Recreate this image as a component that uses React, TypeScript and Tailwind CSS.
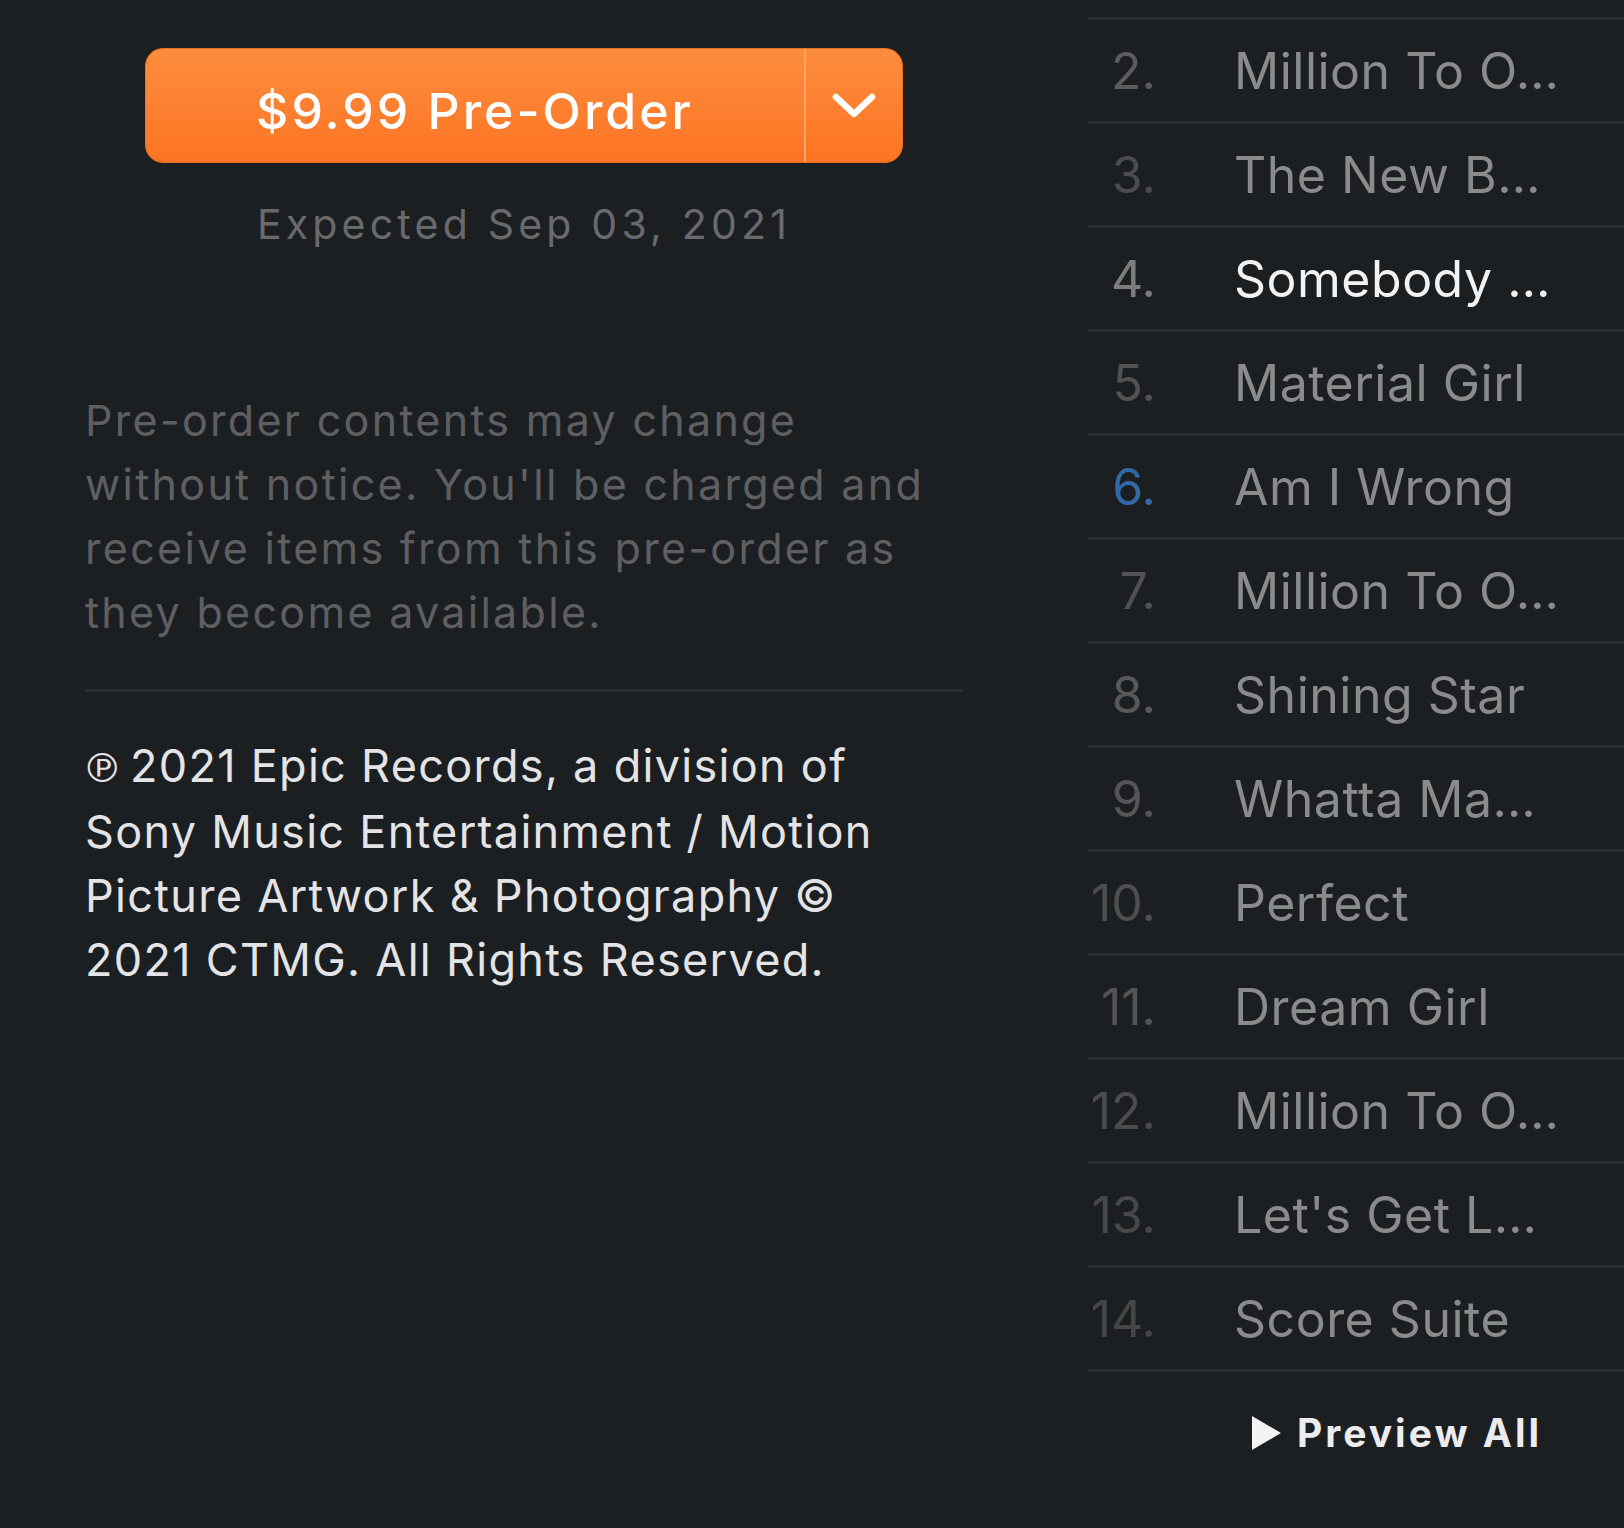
import React from "react";

const tracks: { n: string; t: string; nc: string; tc: string }[] = [
  { n: "2.", t: "Million To O…", nc: "text-[#5c5c5f]", tc: "text-[#8b8b8e]" },
  { n: "3.", t: "The New B…", nc: "text-[#4c4c4f]", tc: "text-[#8b8b8e]" },
  { n: "4.", t: "Somebody …", nc: "text-[#7d7d80]", tc: "text-[#f2f2f2]" },
  { n: "5.", t: "Material Girl", nc: "text-[#525255]", tc: "text-[#8b8b8e]" },
  { n: "6.", t: "Am I Wrong", nc: "text-[#2f6aa6]", tc: "text-[#8b8b8e]" },
  { n: "7.", t: "Million To O…", nc: "text-[#525255]", tc: "text-[#8b8b8e]" },
  { n: "8.", t: "Shining Star", nc: "text-[#59595c]", tc: "text-[#8b8b8e]" },
  { n: "9.", t: "Whatta Ma…", nc: "text-[#565659]", tc: "text-[#8b8b8e]" },
  { n: "10.", t: "Perfect", nc: "text-[#4e4e51]", tc: "text-[#8b8b8e]" },
  { n: "11.", t: "Dream Girl", nc: "text-[#545457]", tc: "text-[#8b8b8e]" },
  { n: "12.", t: "Million To O…", nc: "text-[#4c4c4f]", tc: "text-[#8b8b8e]" },
  { n: "13.", t: "Let's Get L…", nc: "text-[#48484b]", tc: "text-[#8b8b8e]" },
  { n: "14.", t: "Score Suite", nc: "text-[#464649]", tc: "text-[#8b8b8e]" },
];

export default function App() {
  return (
    <div
      className="flex h-[1528px] w-[1624px] overflow-hidden bg-[#1c1f22]"
      style={{ fontFamily: "Inter, 'Noto Sans', sans-serif" }}
    >
      {/* Left column */}
      <div className="w-[1088px] shrink-0">
        <div className="ml-[85px] flex w-[878px] flex-col">
          {/* Button */}
          <div className="mx-auto mt-[48px] flex h-[115px] w-[758px] overflow-hidden rounded-[18px] border border-[#ea6f22] bg-gradient-to-b from-[#fd8d3d] to-[#fc7422]">
            <div className="flex flex-1 items-center justify-center pt-[10px] text-[50px] font-medium leading-none tracking-[3px] text-white">
              $9.99 Pre-Order
            </div>
            <div className="w-[2px] bg-[#fda56c]" />
            <div className="flex w-[96px] items-center justify-center">
              <svg width="44" height="26" viewBox="0 0 44 26">
                <polyline
                  points="4,4 22,21 40,4"
                  fill="none"
                  stroke="white"
                  strokeWidth="6.5"
                  strokeLinecap="round"
                  strokeLinejoin="round"
                />
              </svg>
            </div>
          </div>

          <div className="mt-[37px] text-center text-[41px] leading-[48px] tracking-[4.2px] text-[#6a6a6d]">
            Expected Sep 03, 2021
          </div>

          <div className="mt-[140px] text-[43px] leading-[64px] tracking-[2.3px] text-[#5f5f62]">
            <div className="whitespace-nowrap">Pre-order contents may change</div>
            <div className="whitespace-nowrap">without notice. You'll be charged and</div>
            <div className="whitespace-nowrap">receive items from this pre-order as</div>
            <div className="whitespace-nowrap">they become available.</div>
          </div>

          <div className="mt-[45px] h-[3px] w-full bg-[#2b2e32]" />

          <div className="mt-[42px] text-[45px] leading-[64px] tracking-[1.3px] text-[#e4e4e6]">
            <div className="whitespace-nowrap">
              <span
                className="ml-[-3px] mr-[-6px] text-[40px] tracking-normal"
                style={{ fontFamily: "'DejaVu Sans', sans-serif" }}
              >
                ℗
              </span>{" "}
              2021 Epic Records, a division of
            </div>
            <div className="whitespace-nowrap">Sony Music Entertainment / Motion</div>
            <div className="whitespace-nowrap">Picture Artwork &amp; Photography ©</div>
            <div className="whitespace-nowrap">2021 CTMG. All Rights Reserved.</div>
          </div>
        </div>
      </div>

      {/* Right column: track list */}
      <div className="flex-1">
        <ul className="mt-[17px] border-b-[3px] border-[#2b2e32]">
          {tracks.map((tr) => (
            <li
              key={tr.n}
              className="flex h-[104px] items-center border-t-[3px] border-[#2b2e32] text-[50px] leading-none"
            >
              <span className={`w-[68px] text-right ${tr.nc}`}>{tr.n}</span>
              <span className={`ml-[78px] whitespace-nowrap tracking-[0.5px] ${tr.tc}`}>{tr.t}</span>
            </li>
          ))}
        </ul>
        <div className="ml-[164px] mt-[41px] flex items-center">
          <svg width="29" height="34" viewBox="0 0 29 34">
            <polygon points="0,0 29,17 0,34" fill="#f4f4f4" />
          </svg>
          <span className="ml-[16px] text-[39px] font-bold leading-none tracking-[3px] text-[#ececee]">
            Preview All
          </span>
        </div>
      </div>
    </div>
  );
}
